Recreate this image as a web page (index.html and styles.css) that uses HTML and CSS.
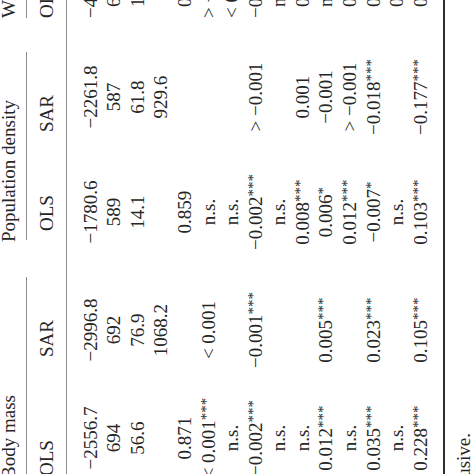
FILE: index.html
```html
<!DOCTYPE html>
<html lang="en">
<head>
<meta charset="utf-8">
<title>Table</title>
<link rel="stylesheet" href="styles.css">
</head>
<body>
<div class="sheet">
  <div class="groups">
    <div class="group g-bm">Body mass</div>
    <div class="group g-pd">Population density</div>
    <div class="group g-w">Wing length</div>
  </div>
  <div class="subs">
    <div class="sub s1">OLS</div>
    <div class="sub s2">SAR</div>
    <div class="sub s3">OLS</div>
    <div class="sub s4">SAR</div>
    <div class="sub s5">OLS</div>
  </div>
  <div class="data">
    <div class="c">−2556.7</div><div class="c">−2996.8</div><div class="c">−1780.6</div><div class="c">−2261.8</div><div class="c w in">−4031.5</div>
    <div class="c">694</div><div class="c">692</div><div class="c">589</div><div class="c">587</div><div class="c w">612</div>
    <div class="c">56.6</div><div class="c">76.9</div><div class="c">14.1</div><div class="c">61.8</div><div class="c w">15.3</div>
    <div class="c"></div><div class="c">1068.2</div><div class="c"></div><div class="c">929.6</div><div class="c w"></div>
    <div class="c">0.871</div><div class="c"></div><div class="c">0.859</div><div class="c"></div><div class="c w">0.902</div>
    <div class="c">&lt; 0.001<span class="sig">***</span></div><div class="c">&lt; 0.001</div><div class="c">n.s.</div><div class="c"></div><div class="c w in">&gt; −0.001</div>
    <div class="c">n.s.</div><div class="c"></div><div class="c">n.s.</div><div class="c"></div><div class="c w in">&lt; 0.001</div>
    <div class="c">−0.002<span class="sig">***</span></div><div class="c">−0.001<span class="sig">***</span></div><div class="c">−0.002<span class="sig">***</span></div><div class="c">&gt; −0.001</div><div class="c w in">−0.004<span class="sig">***</span></div>
    <div class="c">n.s.</div><div class="c"></div><div class="c">n.s.</div><div class="c"></div><div class="c w">n.s.</div>
    <div class="c">n.s.</div><div class="c"></div><div class="c">0.008<span class="sig">***</span></div><div class="c">0.001</div><div class="c w">0.009<span class="sig">***</span></div>
    <div class="c">0.012<span class="sig">***</span></div><div class="c">0.005<span class="sig">***</span></div><div class="c">0.006<span class="sig">*</span></div><div class="c">−0.001</div><div class="c w">n.s.</div>
    <div class="c">n.s.</div><div class="c"></div><div class="c">0.012<span class="sig">***</span></div><div class="c">&gt; −0.001</div><div class="c w">0.010<span class="sig">***</span></div>
    <div class="c">0.035<span class="sig">***</span></div><div class="c">0.023<span class="sig">***</span></div><div class="c">−0.007<span class="sig">*</span></div><div class="c">−0.018<span class="sig">***</span></div><div class="c w">0.021<span class="sig">***</span></div>
    <div class="c">n.s.</div><div class="c"></div><div class="c">n.s.</div><div class="c"></div><div class="c w">0.004<span class="sig">*</span></div>
    <div class="c">0.228<span class="sig">***</span></div><div class="c">0.105<span class="sig">***</span></div><div class="c">0.103<span class="sig">***</span></div><div class="c">−0.177<span class="sig">***</span></div><div class="c w">0.117<span class="sig">***</span></div>
  </div>
  <div class="foot"><span>Significance levels are two-sided and inclusive.</span></div>
</div>
</body>
</html>
```

FILE: styles.css
```css
html, body {
  margin: 0;
  padding: 0;
  width: 474px;
  height: 474px;
  overflow: hidden;
  background: #ffffff;
}

.sheet {
  width: 474px;
  height: 474px;
  overflow: hidden;
  transform: rotate(-90deg);
  transform-origin: 237px 237px;
  font-family: "Liberation Serif", "Times New Roman", serif;
  font-size: 19px;
  color: #262626;
  background: #ffffff;
}

.groups {
  display: flex;
  margin-left: -5px;
}

.group {
  flex: none;
  white-space: nowrap;
  line-height: 18px;
  height: 18px;
  padding-bottom: 8px;
  border-bottom: 1px solid #8c8c8c;
}

.g-bm {
  width: 202px;
}

.g-pd {
  width: 188px;
  margin-left: 37px;
  text-indent: -2px;
}

.g-w {
  width: 100px;
  margin-left: 34px;
}

.subs {
  display: flex;
  margin-left: -2px;
  line-height: 23.6px;
  padding-top: 8px;
  padding-bottom: 7.4px;
  border-bottom: 1px solid #8c8c8c;
}

.sub {
  flex: none;
  white-space: nowrap;
}

.s1 { width: 119px; }
.s2 { width: 126px; }
.s3 { width: 99px; }
.s4 { width: 114px; }
.s5 { width: 100px; }

.data {
  display: grid;
  grid-template-columns: 152px 64px 172px 58px 166px;
  grid-auto-rows: 23.57px;
  line-height: 23.57px;
  margin-left: -40px;
  padding-top: 11.8px;
  padding-bottom: 10.6px;
  border-bottom: 2px solid #2e2e2e;
}

.c {
  display: flex;
  justify-content: center;
  white-space: nowrap;
}

.sig {
  font-size: 15px;
  position: relative;
  top: -2px;
}

.c.w {
  justify-content: flex-start;
  padding-left: 61px;
}

.c.w.in {
  padding-left: 50px;
}

.foot {
  display: flex;
  justify-content: flex-end;
  width: 41px;
  white-space: nowrap;
  line-height: 23.57px;
  padding-top: 6.8px;
}
```
